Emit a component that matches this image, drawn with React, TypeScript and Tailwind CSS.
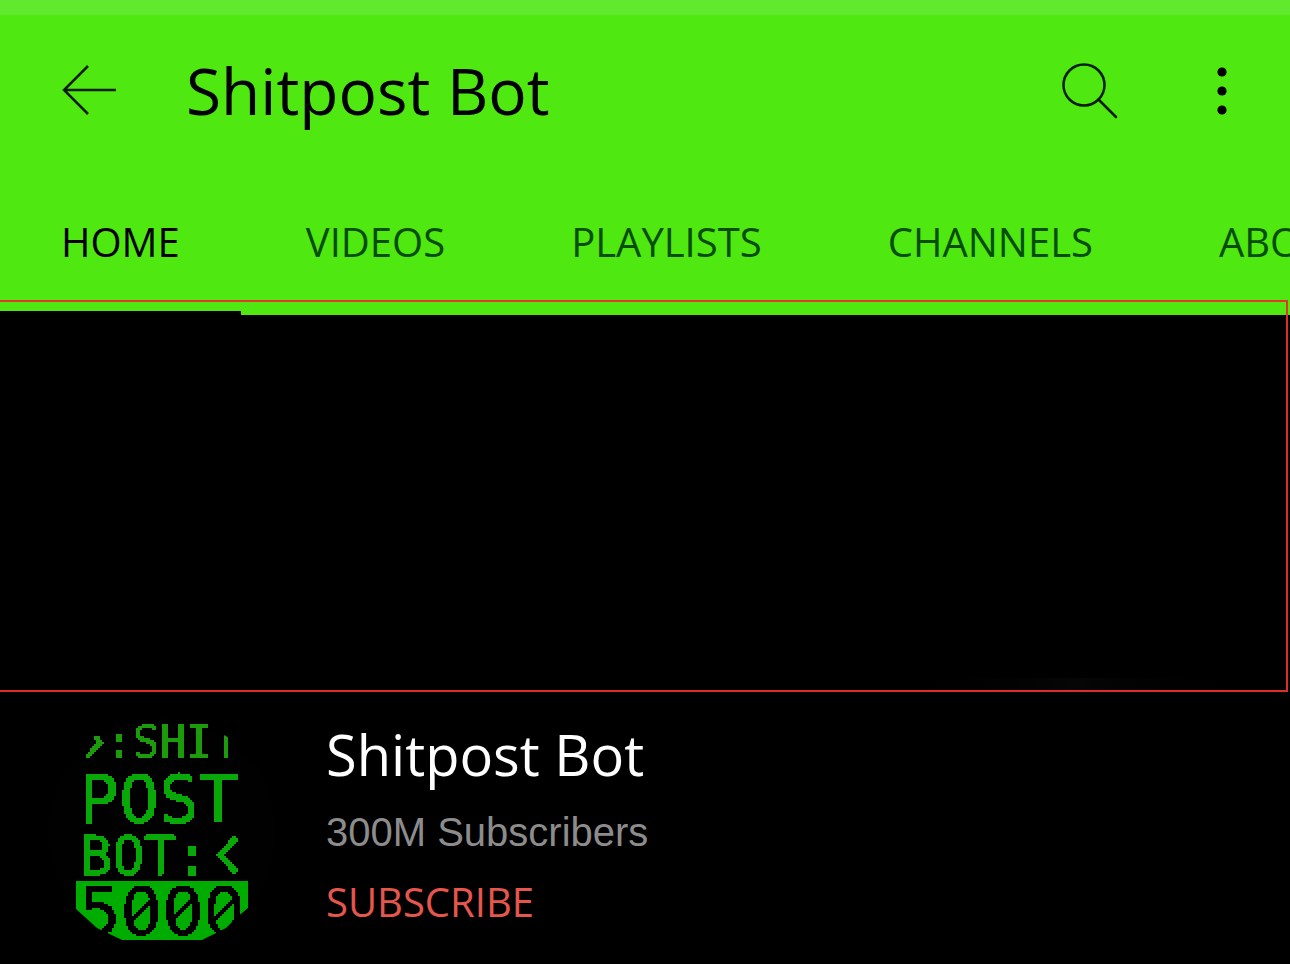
import React from 'react';

const tabs = [
  { label: 'HOME', active: true },
  { label: 'VIDEOS' },
  { label: 'PLAYLISTS' },
  { label: 'CHANNELS' },
  { label: 'ABOUT' },
];

const BackIcon: React.FC = () => (
  <svg className="w-14 h-14" viewBox="0 0 56 56" fill="none" stroke="#021c00" strokeWidth="2.5">
    <path d="M56 27H4M28 3 4 27l24 24" />
  </svg>
);

const SearchIcon: React.FC = () => (
  <svg className="w-14 h-14" viewBox="0 0 56 56" fill="none" stroke="#021c00" strokeWidth="2.5" strokeLinecap="round">
    <circle cx="22" cy="22" r="20.5" />
    <path d="M36.5 36.5 54 54" />
  </svg>
);

const MoreIcon: React.FC = () => (
  <svg className="w-3 h-14" viewBox="0 0 12 56" fill="#000">
    <circle cx="6" cy="9" r="4.6" />
    <circle cx="6" cy="28" r="4.6" />
    <circle cx="6" cy="47" r="4.6" />
  </svg>
);

const Avatar: React.FC = () => (
  <svg
    className="w-[228px] h-[228px] shrink-0 font-['DejaVu_Sans_Mono',monospace]"
    viewBox="9 18 228 228"
    role="img"
    aria-label="Shitpost Bot avatar"
  >
    <defs>
      {/* mosaic: sample one pixel per 2x2 cell and copy it over the cell */}
      <filter id="pixels" filterUnits="userSpaceOnUse" x="9" y="18" width="228" height="228" colorInterpolationFilters="sRGB">
        <feFlood x="9" y="18" width="1" height="1" floodColor="#000" />
        <feComposite x="9" y="18" width="2" height="2" />
        <feTile result="grid" />
        <feComposite in="SourceGraphic" in2="grid" operator="in" />
        <feComponentTransfer result="dots">
          <feFuncA type="discrete" tableValues="0 1" />
        </feComponentTransfer>
        <feOffset in="dots" dx="1" dy="0" result="right" />
        <feMerge result="row">
          <feMergeNode in="dots" />
          <feMergeNode in="right" />
        </feMerge>
        <feOffset in="row" dx="0" dy="1" result="below" />
        <feMerge>
          <feMergeNode in="row" />
          <feMergeNode in="below" />
        </feMerge>
      </filter>
      <clipPath id="topCut">
        <path d="M60 62V22H170L180 33 187 36 192 40V62Z" />
      </clipPath>
    </defs>
    <circle cx="123" cy="132" r="114" fill="#010101" />
    <path d="M47 57 61 42 56 36" fill="none" stroke="#1c9c0c" strokeWidth="5" filter="url(#pixels)" />
    <g clipPath="url(#topCut)">
      <text x="67" y="57" fontSize="44" fill="#1c9c0c" stroke="#1c9c0c" strokeWidth="0.5" filter="url(#pixels)">:SHIT</text>
    </g>
    <text x="40" y="122" fontSize="66" fill="#09a809" stroke="#09a809" strokeWidth="1" filter="url(#pixels)">POST</text>
    <g fill="#09a809" stroke="#09a809" filter="url(#pixels)">
      <text x="41" y="174" fontSize="53">BOT:</text>
      <path d="M197 137 180 154.5 197 172" fill="none" strokeWidth="6" />
    </g>
    <path d="M37 181H209V208L197 218 187 228 163 240H83L58 228 37 209Z" fill="#00ac00" />
    <g stroke="#000" filter="url(#pixels)">
      <text x="40" y="234" fontSize="65" strokeWidth="1" className="font-['DejaVu_Sans',sans-serif]">5000</text>
      <path d="M90 222 114 197M131 222 155 197M172 222 196 197" strokeWidth="4.5" />
    </g>
  </svg>
);

export default function App() {
  return (
    <div className="relative min-h-screen overflow-hidden bg-black font-['Open_Sans',sans-serif]">
      <header className="bg-[#4fe811]">
        <div className="h-[15px] bg-[#61e92d]" />
        <div className="flex items-center h-[152px] pl-[60px] pr-[62px]">
          <button aria-label="Back">
            <BackIcon />
          </button>
          <h1 className="ml-[70px] text-[64px] leading-[80px] text-black">Shitpost Bot</h1>
          <div className="ml-auto flex items-center gap-[98px]">
            <button aria-label="Search">
              <SearchIcon />
            </button>
            <button aria-label="More options">
              <MoreIcon />
            </button>
          </div>
        </div>

        <nav className="flex gap-1 h-[148px] overflow-hidden text-[40px] leading-[56px]">
          {tabs.map((tab) => (
            <a
              key={tab.label}
              href="#"
              className={`flex items-center shrink-0 pt-1.5 px-[61px] border-b-4 ${
                tab.active ? 'border-black text-black' : 'border-transparent text-[#064d00]'
              }`}
            >
              {tab.label}
            </a>
          ))}
        </nav>
      </header>

      <div className="flex flex-col justify-end h-[375px]">
        <div className="self-end w-1/3 h-3 bg-linear-to-r from-black via-[#060606] to-black" />
      </div>

      <section className="flex items-start pt-7 pl-12">
        <Avatar />
        <div className="ml-[50px] pt-1">
          <h2 className="text-[56px] leading-[64px] text-white">Shitpost Bot</h2>
          <p className="mt-3.5 font-['Liberation_Sans',sans-serif] text-[40px] leading-[64px] text-[#8c8c8c]">
            300M Subscribers
          </p>
          <button className="mt-1.5 text-[40px] leading-[64px] text-[#e5564d]">SUBSCRIBE</button>
        </div>
      </section>

      {/* highlight frame over the banner */}
      <div className="pointer-events-none absolute left-0 right-[2px] top-[300px] h-[392px] border-2 border-l-0 border-[#ea2d2d]/95" />
    </div>
  );
}
